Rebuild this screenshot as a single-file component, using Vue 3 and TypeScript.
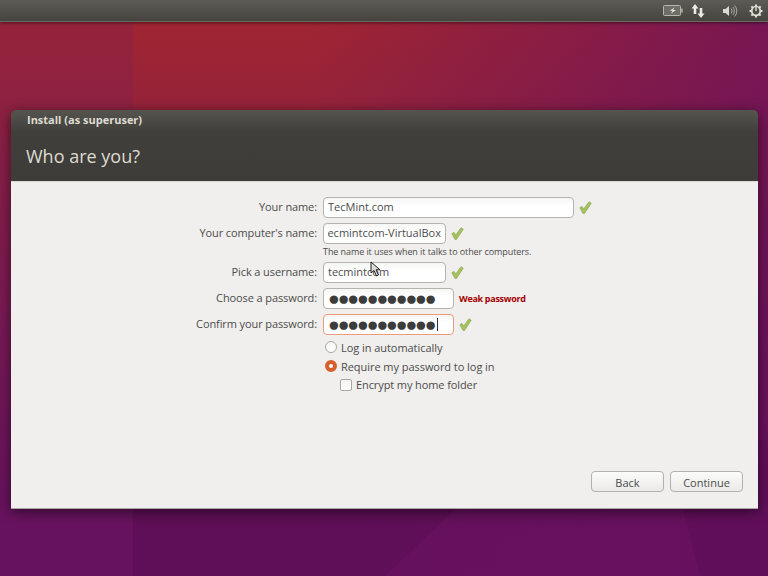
<script setup lang="ts">
interface Row {
  label: string
  value: string
  width: number
  mark?: boolean
  focus?: boolean
  hint?: string
  note?: string
  secret?: boolean
  clip?: boolean
}
const rows: Row[] = [
  { label: 'Your name:', value: 'TecMint.com', width: 251, mark: true },
  { label: "Your computer's name:", value: 'tecmintcom-VirtualBox', width: 123, mark: true, clip: true, hint: 'The name it uses when it talks to other computers.' },
  { label: 'Pick a username:', value: 'tecmintcom', width: 123, mark: true },
  { label: 'Choose a password:', value: '●●●●●●●●●●●', width: 131, secret: true, note: 'Weak password' },
  { label: 'Confirm your password:', value: '●●●●●●●●●●●', width: 131, secret: true, mark: true, focus: true },
]
const teeth = [0, 45, 90, 135, 180, 225, 270, 315]
</script>

<template>
  <div class="desktop">
    <div class="panel">
      <svg class="ind batt" width="20" height="11" viewBox="0 0 20 11"><rect x="0.5" y="0.5" width="17" height="10" rx="1" fill="#6f6d65" stroke="#b8b6ad"/><rect x="18" y="3.500" width="2" height="4" fill="#9c9a91"/><path d="M11.500 2.500 6.500 5.800h3l-1.500 2.700 5-3.500h-3z" fill="#e6e4dc"/></svg>
      <svg class="ind arrows" width="14" height="14" viewBox="0 0 14 14"><path d="M4 0 7.500 4.500H5.300V10H2.700V4.500H.5zM10 14 6.500 9.500h2.200V4h2.600v5.500h2.200z" fill="#ecebe2"/></svg>
      <svg class="ind vol" width="16" height="14" viewBox="0 0 16 14"><path d="M1 5h2.500L7 2v10L3.500 9H1z" fill="#dcdad0"/><path d="M9 4.500a3.500 3.500 0 0 1 0 5M10.800 3a6 6 0 0 1 0 8M12.600 1.500a8 8 0 0 1 0 11" fill="none" stroke="#aaa89f" stroke-width="1"/></svg>
      <svg class="ind gear" width="14" height="14" viewBox="0 0 14 14">
        <circle cx="7" cy="7" r="4.300" fill="none" stroke="#e2e0d6" stroke-width="1.800"/>
        <path v-for="a in teeth" :key="a" d="M7 .5v2" stroke="#e2e0d6" stroke-width="2" :transform="`rotate(${a} 7 7)`"/>
        <path d="M7 3v4.500" stroke="#4d4c46" stroke-width="3"/>
        <path d="M7 2v5" stroke="#e2e0d6" stroke-width="1.400"/>
      </svg>
    </div>
    <div class="stage">
      <div class="window">
        <header class="head">
          <div class="title">Install (as superuser)</div>
          <h1 class="step">Who are you?</h1>
        </header>
        <div class="body">
          <div class="form">
            <template v-for="r in rows" :key="r.label">
              <div class="row">
                <label class="label">{{ r.label }}</label>
                <div class="field" :class="{ focus: r.focus, secret: r.secret, clip: r.clip }" :style="{ width: r.width + 'px' }">
                  <span class="val">{{ r.value }}</span><i v-if="r.focus" class="caret"></i>
                </div>
                <svg v-if="r.mark" class="check" width="13" height="13" viewBox="0 0 13 13"><path d="M.8 6.800 3 5.300l1.700 2.600L10 .7l2.300 1.500L5.500 12.500H4z" fill="#a6c160" stroke="#8aa548" stroke-width=".6" stroke-linejoin="round"/></svg>
                <span v-if="r.note" class="note">{{ r.note }}</span>
              </div>
              <div v-if="r.hint" class="hint">{{ r.hint }}</div>
            </template>
            <div class="opts">
              <div class="opt"><span class="radio"></span>Log in automatically</div>
              <div class="opt"><span class="radio on"></span>Require my password to log in</div>
              <div class="opt sub"><span class="box"></span>Encrypt my home folder</div>
            </div>
          </div>
          <div class="actions">
            <button class="btn">Back</button>
            <button class="btn">Continue</button>
          </div>
        </div>
      </div>
    </div>
    <svg class="cursor" width="12" height="16" viewBox="0 0 12 16"><path d="M1 1v11l3-2.500L6.500 15l2-1L6 8.800h4z" fill="#dcdbd8" stroke="#222" stroke-width="1"/></svg>
  </div>
</template>

<style>
html, body { margin: 0; height: 100%; }
</style>

<style scoped>
.desktop {
  position: relative;
  width: 768px;
  height: 576px;
  overflow: hidden;
  font-family: "Open Sans", "Noto Sans", sans-serif;
  background:
    linear-gradient(90deg, rgba(110, 25, 100, .2) 0 133px, rgba(0, 0, 0, 0) 133px),
    linear-gradient(90deg, rgba(104, 16, 96, 0) 40%, rgba(104, 16, 96, .7) 100%),
    linear-gradient(180deg, #a02531 22px, #95233a 110px, #7f1a50 300px, #67115d 500px, #66115e 576px);
}
.desktop::before {
  content: "";
  position: absolute;
  inset: 0;
  background: rgba(40, 0, 40, .1);
  clip-path: polygon(133px 480px, 486px 480px, 385px 576px, 133px 576px);
}
.desktop::after {
  content: "";
  position: absolute;
  inset: 0;
  background: rgba(40, 0, 40, .09);
  clip-path: polygon(665px 440px, 768px 440px, 768px 576px, 700px 576px);
}
.panel, .stage { position: relative; z-index: 1; }
.panel {
  height: 22px;
  box-sizing: border-box;
  display: flex;
  align-items: center;
  justify-content: flex-end;
  background: linear-gradient(180deg, #5c5b56, #45443f);
  border-bottom: 1px solid #6a6860;
  box-shadow: 0 1px 3px rgba(0, 0, 0, .5);
  padding-right: 5px;
}
.arrows { margin-left: 8px; }
.vol { margin-left: 17px; }
.gear { margin-left: 11px; }
.stage { padding: 88px 10px 0 11px; }
.window {
  height: 399px;
  display: flex;
  flex-direction: column;
  border-radius: 5px 5px 0 0;
  overflow: hidden;
  box-shadow: 0 3px 14px rgba(0, 0, 0, .55);
}
.head {
  height: 72px;
  flex: none;
  box-sizing: border-box;
  background: linear-gradient(180deg, #55544e 0, #403f3b 22px, #3d3c38 100%);
  border-bottom: 1px solid #d8d6d2;
  color: #dfdbd2;
}
.title {
  padding: 2px 0 0 16px;
  font-size: 11px;
  font-weight: 700;
  line-height: 15px;
}
.step {
  margin: 0;
  padding: 17px 0 0 15px;
  font-size: 18px;
  font-weight: 400;
  line-height: 24px;
}
.body {
  flex: 1;
  display: flex;
  flex-direction: column;
  background: #f0efed;
  border-bottom: 1px solid #a9a7a3;
  color: #4c4c4c;
  font-size: 11px;
}
.form { flex: 1; padding-top: 15px; }
.row {
  display: flex;
  align-items: center;
  height: 21px;
  margin-bottom: 5px;
}
.label {
  width: 312px;
  flex: none;
  text-align: right;
  padding: 0 6px 2px 0;
  box-sizing: border-box;
  letter-spacing: -.1px;
}
.field {
  height: 21px;
  box-sizing: border-box;
  flex: none;
  border: 1px solid #b5b3ae;
  border-radius: 4px;
  background: linear-gradient(180deg, #f6f6f5, #fff 40%);
  font-size: 11px;
  line-height: 17px;
  padding: 0 4px;
  white-space: nowrap;
  display: flex;
  justify-content: flex-start;
}
.field.clip .val {
  flex: 1;
  min-width: 0;
  display: flex;
  justify-content: flex-end;
  overflow: hidden;
}
.field.secret { color: #3c3c3c; font-size: 19.500px; letter-spacing: -2.1px; line-height: 17px; }
.field.focus { border-color: #eb9a7c; }
.caret { width: 1px; height: 13px; margin: 3px 0 0 3px; background: #333; }
.check { margin-left: 5px; }
.note { margin-left: 5px; color: #a40000; font-size: 9px; font-weight: 700; letter-spacing: -.3px; padding-bottom: 1px; }
.hint { margin: -5px 0 0 312px; height: 18px; font-size: 9px; line-height: 16px; letter-spacing: -.08px; }
.opts { padding: 0 0 0 314px; margin-top: -2px; letter-spacing: -.05px; }
.opt { display: flex; align-items: center; height: 19px; gap: 4px; line-height: 17px; padding-bottom: 1px; box-sizing: border-box; }
.opt.sub { padding: 0 0 2px 15px; letter-spacing: -.1px; }
.radio {
  width: 12px; height: 12px; box-sizing: border-box; border-radius: 50%;
  border: 1px solid #a9a7a2; background: linear-gradient(180deg, #f5f5f4, #fff);
}
.radio.on { border: 4px solid #d6602d; background: #fff; }
.box {
  width: 12px; height: 12px; box-sizing: border-box; border-radius: 2px;
  border: 1px solid #a9a7a2; background: linear-gradient(180deg, #f3f3f2, #fff);
}
.actions { display: flex; justify-content: flex-end; gap: 6px; padding: 0 15px 16px 0; }
.btn {
  width: 73px;
  height: 21px;
  padding: 1px 0 0;
  border: 1px solid #b3b1ac;
  border-radius: 4px;
  background: linear-gradient(180deg, #fbfbfa, #ebeae8);
  color: #4c4c4c;
  font: 11px "Open Sans", "Noto Sans", sans-serif;
}
.cursor { position: absolute; left: 370px; top: 261px; z-index: 2; }
</style>
